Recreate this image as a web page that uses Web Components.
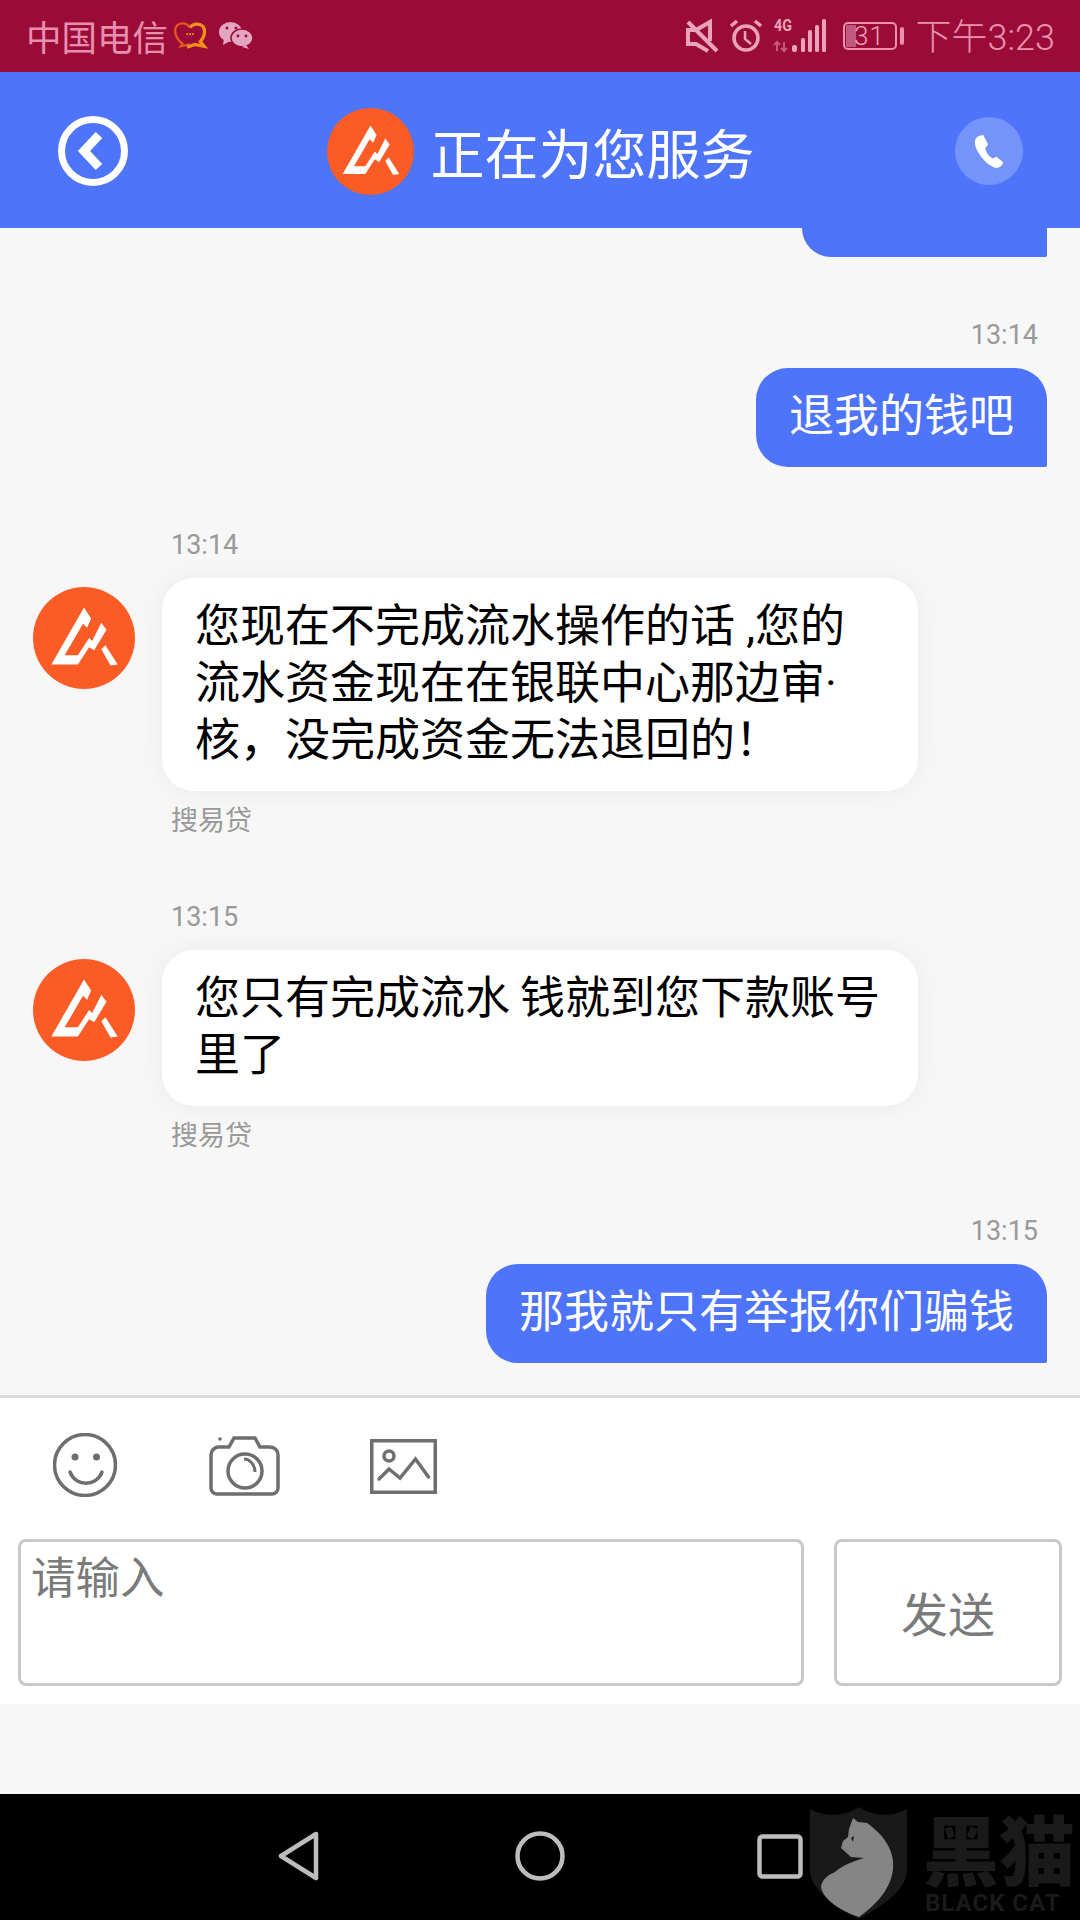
<!DOCTYPE html>
<html lang="zh">
<head>
<meta charset="utf-8">
<title>chat</title>
<style>
  html, body { margin: 0; padding: 0; background: #f7f7f7; }
  body { font-family: "Noto Sans CJK SC", "Noto Sans", sans-serif; }
</style>
</head>
<body>

<chat-app>
  <status-bar></status-bar>
  <chat-header title="正在为您服务"></chat-header>
  <chat-list>
    <chat-stub></chat-stub>
    <chat-message side="me" time="13:14" style="margin-top:62px">退我的钱吧</chat-message>
    <chat-message side="them" time="13:14" name="搜易贷" style="margin-top:62px">您现在不完成流水操作的话<span style="font-family:Roboto,sans-serif;line-height:0"> ,</span>您的<br>流水资金现在在银联中心那边审<span style="font-family:Roboto,sans-serif;line-height:0">·</span><br>核，没完成资金无法退回的！</chat-message>
    <chat-message side="them" time="13:15" name="搜易贷" style="margin-top:66px">您只有完成流水 钱就到您下款账号<br>里了</chat-message>
    <chat-message side="me" time="13:15" style="margin-top:65px">那我就只有举报你们骗钱</chat-message>
  </chat-list>
  <chat-composer></chat-composer>
  <nav-bar></nav-bar>
</chat-app>

<script>
const LOGO = `
  <svg viewBox="0 0 100 100" width="100%" height="100%" style="display:block">
    <circle cx="50" cy="50" r="50" fill="#fb5c25"/>
    <path fill="#fff" d="M18 76 50 20 57 31 53 40 49 36 31 67H44L55 50 58 53 67 35 72 42 60 62 55 59 44 76Z"/>
    <path fill="#fff" d="M67 61 71 57 83 76 76 77Z"/>
  </svg>`;

class ChatApp extends HTMLElement {
  constructor() {
    super();
    this.attachShadow({mode: 'open'}).innerHTML = `
      <style>
        :host { display: flex; flex-direction: column; width: 1080px; height: 1920px; overflow: hidden; background: #f7f7f7; }
      </style>
      <slot></slot>`;
  }
}

class StatusBar extends HTMLElement {
  constructor() {
    super();
    this.attachShadow({mode: 'open'}).innerHTML = `
      <style>
        :host { display: flex; flex: none; height: 72px; background: #9b0b37; color: #e892b0; justify-content: space-between; align-items: center; box-sizing: border-box; padding: 0 25px 0 26px; }
        .group { display: flex; align-items: center; }
        .carrier { font-size: 35.500px; line-height: 72px; color: #e78fae; font-family: "Noto Sans CJK SC", sans-serif; font-weight: 400; }
        .clock { font: 300 36px/72px Roboto, "Noto Sans CJK SC", sans-serif; margin-left: 12px; white-space: nowrap; position: relative; top: 2px; }
        .batt { position: relative; box-sizing: border-box; width: 54px; height: 28px; border: 2px solid #e892b0; border-radius: 5px; font: 300 26px/24px Roboto, sans-serif; text-align: center; color: #eba3bc; letter-spacing: 1px; }
        .batt i { position: absolute; left: 1px; top: 1px; bottom: 1px; width: 10px; background: #c25a80; }
        .batt span { position: relative; }
        .tip { width: 4px; height: 18px; background: #e892b0; border-radius: 2px; margin-left: 3px; }
        svg { display: block; overflow: visible; }
      </style>
      <div class="group">
        <span class="carrier">中国电信</span>
        <svg width="32" height="28" viewBox="0 0 34 28" style="margin-left:6px" fill="none">
          <path d="M17 5C14 0 7-1 3 3-1 8 2 17 9 22L7 25 17 23" stroke="#e0561e" stroke-width="2.500"/>
          <path d="M17 5c3-4 10-5 14-1 3 5 1 12-3 16l4 5-10-2-8 3" stroke="#f0921a" stroke-width="3.500"/>
          <path d="M13 12h8" stroke="#f0921a" stroke-width="2" stroke-dasharray="2 1"/>
        </svg>
        <svg width="34" height="28" viewBox="0 0 34 28" style="margin-left:13px">
          <ellipse cx="11.500" cy="10" rx="11.500" ry="10" fill="#e3a5bf"/>
          <path d="M5 16 4 23 11 19Z" fill="#e3a5bf"/>
          <ellipse cx="23" cy="16" rx="11" ry="9" fill="#e3a5bf" stroke="#9b0b37" stroke-width="1.500"/>
          <path d="M27 23 30 27 23 25Z" fill="#e3a5bf"/>
          <circle cx="8" cy="6" r="1.500" fill="#9b0b37"/><circle cx="17" cy="6" r="1.500" fill="#9b0b37"/>
          <circle cx="19" cy="14" r="1.400" fill="#9b0b37"/><circle cx="27" cy="14" r="1.400" fill="#9b0b37"/>
        </svg>
      </div>
      <div class="group">
        <svg width="33" height="34" viewBox="0 0 33 34" fill="none">
          <path d="M24 22V3L10 11H2V25H10L22 32" stroke="#e9a3bb" stroke-width="4"/>
          <path d="M2 3 31 32" stroke="#e9a3bb" stroke-width="4"/>
        </svg>
        <svg width="33" height="34" viewBox="0 0 33 34" fill="none" style="margin-left:11px">
          <circle cx="16" cy="19" r="12" stroke="#e9a3bb" stroke-width="3.500"/>
          <path d="M15 12v8l6 5" stroke="#e9a3bb" stroke-width="2.500"/>
          <path d="M1 7 7 2M25 2l6 5" stroke="#e9a3bb" stroke-width="3.500"/>
        </svg>
        <svg width="53" height="34" viewBox="0 0 53 34" style="margin-left:11px">
          <text x="0" y="12" font-size="16" font-weight="700" fill="#e9a3bb" font-family="Roboto, sans-serif" textLength="18" lengthAdjust="spacingAndGlyphs">4G</text>
          <path d="M3 32V23M0 26l3-3 3 3M10 23v9M7 29l3 3 3-3" stroke="#c25a80" stroke-width="2" fill="none"/>
          <rect x="18" y="26" width="5" height="7" rx="2" fill="#e9a3bb"/>
          <rect x="27" y="19" width="4" height="14" rx="1.500" fill="#e9a3bb"/>
          <rect x="34" y="11" width="4" height="22" rx="1.500" fill="#e9a3bb"/>
          <rect x="41" y="6" width="4" height="27" rx="1.500" fill="#e9a3bb"/>
          <rect x="48" y="0" width="4" height="33" rx="1.500" fill="#e9a3bb"/>
        </svg>
        <div class="batt" style="margin-left:16px"><i></i><span>31</span></div>
        <div class="tip"></div>
        <span class="clock">下午3:23</span>
      </div>`;
  }
}

class ChatHeader extends HTMLElement {
  constructor() {
    super();
    this.attachShadow({mode: 'open'}).innerHTML = `
      <style>
        :host { display: flex; flex: none; height: 156px; background: #4d74f9; align-items: center; box-sizing: border-box; padding: 2px 57px 0 58px; color: #fff; }
        .back { width: 70px; height: 70px; flex: none; }
        .mid { flex: 1; display: flex; align-items: center; justify-content: center; padding-right: 2px; }
        .logo { width: 87px; height: 87px; flex: none; }
        .title { font-size: 54px; line-height: 64px; margin-left: 17px; white-space: nowrap; position: relative; top: 1px; }
        .call { width: 68px; height: 68px; border-radius: 50%; background: #7493fb; display: flex; align-items: center; justify-content: center; flex: none; }
        svg { display: block; }
      </style>
      <svg class="back" viewBox="0 0 70 70" fill="none">
        <circle cx="35" cy="35" r="31.500" stroke="#fff" stroke-width="7"/>
        <path d="M41 19 26 35l15 16" stroke="#fff" stroke-width="9"/>
      </svg>
      <div class="mid">
        <div class="logo">${LOGO}</div>
        <div class="title">${this.getAttribute('title')}</div>
      </div>
      <div class="call">
        <svg width="30" height="34" viewBox="0 0 32 36">
          <path fill="#fff" d="M5 2 10 1l5 10-3 4c1 5 4 9 8 11l4-2 7 6c0 3-3 5-6 6C13 35 0 16 1 8c0-3 2-5 4-6Z"/>
        </svg>
      </div>`;
  }
}

class ChatList extends HTMLElement {
  constructor() {
    super();
    this.attachShadow({mode: 'open'}).innerHTML = `
      <style>
        :host { display: flex; flex-direction: column; flex: none; height: 1167px; overflow: hidden; background: #f7f7f7; }
      </style>
      <slot></slot>`;
  }
}

class ChatStub extends HTMLElement {
  constructor() {
    super();
    this.attachShadow({mode: 'open'}).innerHTML = `
      <style>
        :host { display: block; align-self: flex-end; flex: none; width: 245px; height: 29px; margin-right: 33px; background: #4d74f9; border-radius: 0 0 2px 32px; }
      </style>`;
  }
}

class ChatMessage extends HTMLElement {
  constructor() {
    super();
    const me = this.getAttribute('side') === 'me';
    const name = this.getAttribute('name');
    this.attachShadow({mode: 'open'}).innerHTML = `
      <style>
        :host { display: grid; flex: none; font-family: "Noto Sans CJK SC", sans-serif; }
        :host([side=me]) { justify-items: end; padding-right: 33px; grid-template-columns: 1fr; }
        :host([side=them]) { grid-template-columns: 102px 756px; column-gap: 27px; padding-left: 33px; }
        .time { font: 27px/32px Roboto, sans-serif; color: #999; margin-bottom: 17px; }
        :host([side=me]) .time { padding-right: 9px; }
        :host([side=them]) .time { grid-column: 2; padding-left: 9px; }
        .avatar { grid-column: 1; width: 102px; height: 102px; margin-top: 9px; }
        .bubble { font-size: 45px; line-height: 57px; padding: 16px 33px 26px 33px; box-sizing: border-box; color: #000; white-space: nowrap; }
        :host([side=me]) .bubble { background: #4d74f9; color: #fff; border-radius: 32px 32px 2px 32px; }
        :host([side=them]) .bubble { background: #fff; border-radius: 32px; box-shadow: 0 0 26px rgba(0,0,0,.06); grid-column: 2; }
        .name { grid-column: 2; font-size: 27px; line-height: 32px; color: #999; margin-top: 12px; padding-left: 9px; }
      </style>
      <div class="time">${this.getAttribute('time')}</div>
      ${me ? '' : `<div class="avatar">${LOGO}</div>`}
      <div class="bubble"><slot></slot></div>
      ${name ? `<div class="name">${name}</div>` : ''}`;
  }
}

class ChatComposer extends HTMLElement {
  constructor() {
    super();
    this.attachShadow({mode: 'open'}).innerHTML = `
      <style>
        :host { display: block; flex: none; height: 309px; box-sizing: border-box; background: #fff; border-top: 3px solid #dcdcdc; }
        .tools { display: flex; align-items: flex-start; height: 141px; box-sizing: border-box; padding: 35px 0 0 53px; }
        .tools svg { display: block; fill: none; stroke: #6e6e6e; stroke-width: 3.500; }
        .row { display: flex; padding: 0 18px; gap: 30px; font-family: "Noto Sans CJK SC", sans-serif; color: #7a7a7a; }
        .input, .send { height: 147px; box-sizing: border-box; border: 3px solid #c8c8c8; border-radius: 8px; }
        .input { width: 786px; padding: 3px 10px; font-size: 44.500px; line-height: 60px; }
        .send { width: 228px; display: flex; align-items: center; justify-content: center; font-size: 47px; padding-bottom: 3px; }
      </style>
      <div class="tools">
        <svg width="64" height="64" viewBox="0 0 64 64">
          <circle cx="32" cy="32" r="30.500"/>
          <circle cx="22" cy="24" r="3.500" fill="#6e6e6e" stroke="none"/>
          <circle cx="43.500" cy="24" r="3.500" fill="#6e6e6e" stroke="none"/>
          <path d="M17 39c6 15 26 15 32 0" stroke-linecap="round"/>
        </svg>
        <svg width="71" height="60" viewBox="0 0 71 60" style="margin:3px 0 0 92px">
          <path d="M9 11h11l5-9h21l5 9h10a8 8 0 0 1 8 8v33a6 6 0 0 1-6 6H8a6 6 0 0 1-6-6V19a8 8 0 0 1 7-8Z"/>
          <circle cx="36" cy="35" r="17"/>
          <path d="M35 23c6 0 11 6 11 13" stroke-width="3"/>
          <circle cx="11" cy="3" r="1.800" fill="#6e6e6e" stroke="none"/>
        </svg>
        <svg width="67" height="55" viewBox="0 0 67 55" style="margin:6px 0 0 90px">
          <rect x="1.750" y="1.750" width="63.500" height="51.500"/>
          <circle cx="19" cy="17" r="5"/>
          <path d="M9 40l10-10 11 9L45.500 20 58.500 38" stroke-linecap="round"/>
        </svg>
      </div>
      <div class="row">
        <div class="input">请输入</div>
        <div class="send">发送</div>
      </div>`;
  }
}

class NavBar extends HTMLElement {
  constructor() {
    super();
    this.attachShadow({mode: 'open'}).innerHTML = `
      <style>
        :host { display: flex; flex: none; position: relative; height: 126px; margin-top: auto; background: #000; align-items: center; justify-content: flex-start; box-sizing: border-box; padding: 0 0 2px 278px; }
        svg { display: block; fill: none; stroke: #bdbdbd; stroke-width: 4.500; stroke-linejoin: round; }
        .mark { position: absolute; left: 810px; top: 13px; width: 270px; height: 113px; }
        .mark svg { position: absolute; left: 0; top: 0; stroke: none; }
        .cn { position: absolute; left: 113px; top: 2px; font: 900 76px/76px "Noto Sans CJK SC", sans-serif; color: #1a1a1a; white-space: nowrap; }
        .en { position: absolute; left: 115px; top: 84px; font: 700 24px/24px Roboto, sans-serif; letter-spacing: 1px; color: #1a1a1a; white-space: nowrap; }
      </style>
      <svg width="41" height="50" viewBox="0 0 41 50"><path d="M38 3 3 25l35 22Z"/></svg>
      <svg width="50" height="50" viewBox="0 0 50 50" style="margin-left:196px"><circle cx="25" cy="25" r="22.500"/></svg>
      <svg width="46" height="45" viewBox="0 0 46 45" style="margin-left:192px"><rect x="2.500" y="2.500" width="41" height="40" rx="3"/></svg>
      <div class="mark">
        <svg width="97" height="112" viewBox="0 0 97 112">
          <path fill="#191919" d="M0 2C16 11 36 9 49 0 62 9 82 11 97 2V63C97 84 70 100 49 112 28 100 0 84 0 63Z"/>
          <path fill="#858585" d="M43 11 48 15 57 16C74 28 85 44 83 62 81 82 66 98 49 110 30 104 13 92 11 80 12 72 18 68 25 65 33 58 44 54 54 51L41 50 31 41 33 34 38 30 39 22Z"/>
          <path fill="#191919" d="M41 31 44 29 43 35Z"/>
        </svg>
        <div class="cn">黑猫</div>
        <div class="en">BLACK CAT</div>
      </div>`;
  }
}

customElements.define('chat-app', ChatApp);
customElements.define('status-bar', StatusBar);
customElements.define('chat-header', ChatHeader);
customElements.define('chat-list', ChatList);
customElements.define('chat-stub', ChatStub);
customElements.define('chat-message', ChatMessage);
customElements.define('chat-composer', ChatComposer);
customElements.define('nav-bar', NavBar);
</script>
</body>
</html>
